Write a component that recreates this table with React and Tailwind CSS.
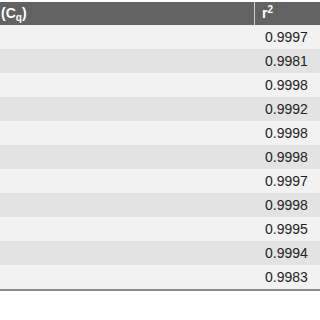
const values = [
  "0.9997",
  "0.9981",
  "0.9998",
  "0.9992",
  "0.9998",
  "0.9998",
  "0.9997",
  "0.9998",
  "0.9995",
  "0.9994",
  "0.9983",
];

export default function App() {
  return (
    <div className="w-[320px] h-[320px] bg-white pt-[2px] overflow-hidden font-['Liberation_Sans',Arial,sans-serif]">
      <div className="flex h-[23px] bg-[#626262] text-white font-bold text-[14px]">
        <div className="flex-1 flex items-center pl-[1px] border-r border-[#cfcfcf]">
          <span>
            (C<sub className="text-[10px]">q</sub>)
          </span>
        </div>
        <div className="w-[65px] flex items-center pl-[7px]">
          <span>
            r<sup className="text-[10px]">2</sup>
          </span>
        </div>
      </div>
      <div className="border-b-2 border-[#8a8a8a]">
        {values.map((v, i) => (
          <div
            key={i}
            className={`flex h-[24px] items-center text-[14px] text-[#222] ${
              i % 2 === 0 ? "bg-[#f2f2f2]" : "bg-[#e3e3e3]"
            }`}
          >
            <div className="flex-1" />
            <div className="w-[65px] pl-[10px]">{v}</div>
          </div>
        ))}
      </div>
    </div>
  );
}
